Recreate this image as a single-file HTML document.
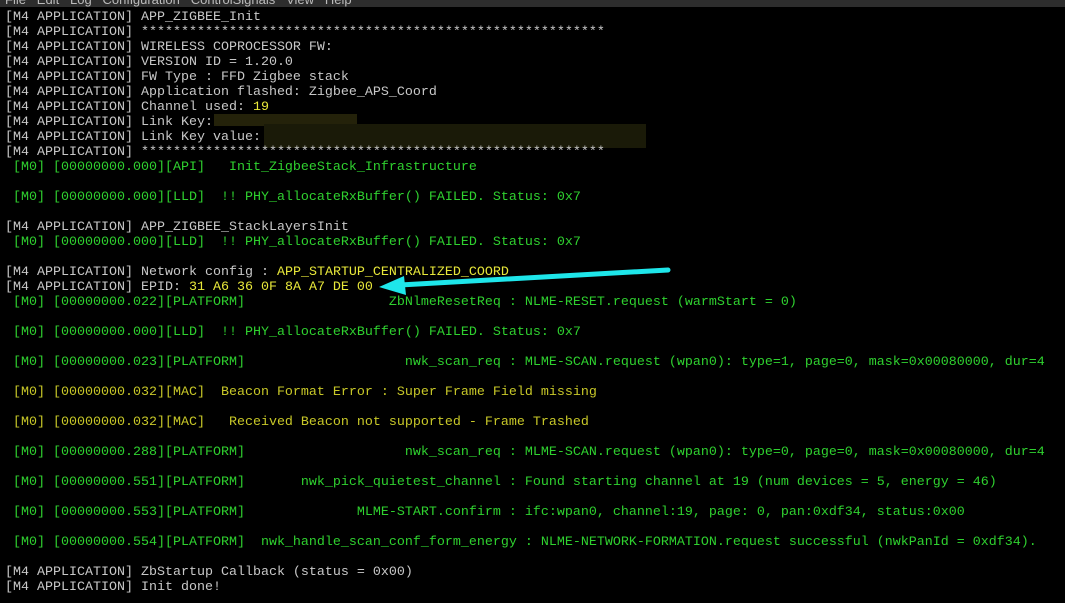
<!DOCTYPE html>
<html><head><meta charset="utf-8"><style>
html,body{margin:0;padding:0;background:#000;width:1065px;height:603px;overflow:hidden}
.bar{position:absolute;left:0;top:0;width:1065px;height:7px;background:#2d2d2d;overflow:hidden}
.bar span{position:absolute;top:-8px;left:5px;color:#bbb;font:13px "Liberation Sans",sans-serif;white-space:pre}
pre{position:absolute;left:5px;top:10px;margin:0;font-family:"Liberation Mono",monospace;font-size:13.33px;line-height:15px;color:#c8c8c8;white-space:pre}
.g{color:#2fd12f}.y{color:#e8e83a}.m{color:#c8c828}
.blur{position:absolute;background:#1e1e08}
</style></head><body>
<div class="bar"><span>File   Edit   Log   Configuration   ControlSignals   View   Help</span></div>
<div class="blur" style="left:214px;top:114px;width:143px;height:12px;background:#24220a"></div>
<div class="blur" style="left:264px;top:124px;width:382px;height:24px;background:#1a1a08"></div>
<pre>[M4 APPLICATION] APP_ZIGBEE_Init
[M4 APPLICATION] **********************************************************
[M4 APPLICATION] WIRELESS COPROCESSOR FW:
[M4 APPLICATION] VERSION ID = 1.20.0
[M4 APPLICATION] FW Type : FFD Zigbee stack
[M4 APPLICATION] Application flashed: Zigbee_APS_Coord
[M4 APPLICATION] Channel used: <span class="y">19</span>
[M4 APPLICATION] Link Key:
[M4 APPLICATION] Link Key value:
[M4 APPLICATION] **********************************************************
<span class="g"> [M0] [00000000.000][API]   Init_ZigbeeStack_Infrastructure</span>

<span class="g"> [M0] [00000000.000][LLD]  !! PHY_allocateRxBuffer() FAILED. Status: 0x7</span>

[M4 APPLICATION] APP_ZIGBEE_StackLayersInit
<span class="g"> [M0] [00000000.000][LLD]  !! PHY_allocateRxBuffer() FAILED. Status: 0x7</span>

[M4 APPLICATION] Network config : <span class="y">APP_STARTUP_CENTRALIZED_COORD</span>
[M4 APPLICATION] EPID: <span class="y">31 A6 36 0F 8A A7 DE 00</span>
<span class="g"> [M0] [00000000.022][PLATFORM]                  ZbNlmeResetReq : NLME-RESET.request (warmStart = 0)</span>

<span class="g"> [M0] [00000000.000][LLD]  !! PHY_allocateRxBuffer() FAILED. Status: 0x7</span>

<span class="g"> [M0] [00000000.023][PLATFORM]                    nwk_scan_req : MLME-SCAN.request (wpan0): type=1, page=0, mask=0x00080000, dur=4</span>

<span class="m"> [M0] [00000000.032][MAC]  Beacon Format Error : Super Frame Field missing</span>

<span class="m"> [M0] [00000000.032][MAC]   Received Beacon not supported - Frame Trashed</span>

<span class="g"> [M0] [00000000.288][PLATFORM]                    nwk_scan_req : MLME-SCAN.request (wpan0): type=0, page=0, mask=0x00080000, dur=4</span>

<span class="g"> [M0] [00000000.551][PLATFORM]       nwk_pick_quietest_channel : Found starting channel at 19 (num devices = 5, energy = 46)</span>

<span class="g"> [M0] [00000000.553][PLATFORM]              MLME-START.confirm : ifc:wpan0, channel:19, page: 0, pan:0xdf34, status:0x00</span>

<span class="g"> [M0] [00000000.554][PLATFORM]  nwk_handle_scan_conf_form_energy : NLME-NETWORK-FORMATION.request successful (nwkPanId = 0xdf34).</span>

[M4 APPLICATION] ZbStartup Callback (status = 0x00)
[M4 APPLICATION] Init done!</pre>
<svg style="position:absolute;left:0;top:0" width="1065" height="603">
<line x1="668" y1="270" x2="400" y2="285" stroke="#1ee6ea" stroke-width="5" stroke-linecap="round"/>
<polygon points="379,287 404,276 406,295" fill="#1ee6ea"/>
</svg>
</body></html>
